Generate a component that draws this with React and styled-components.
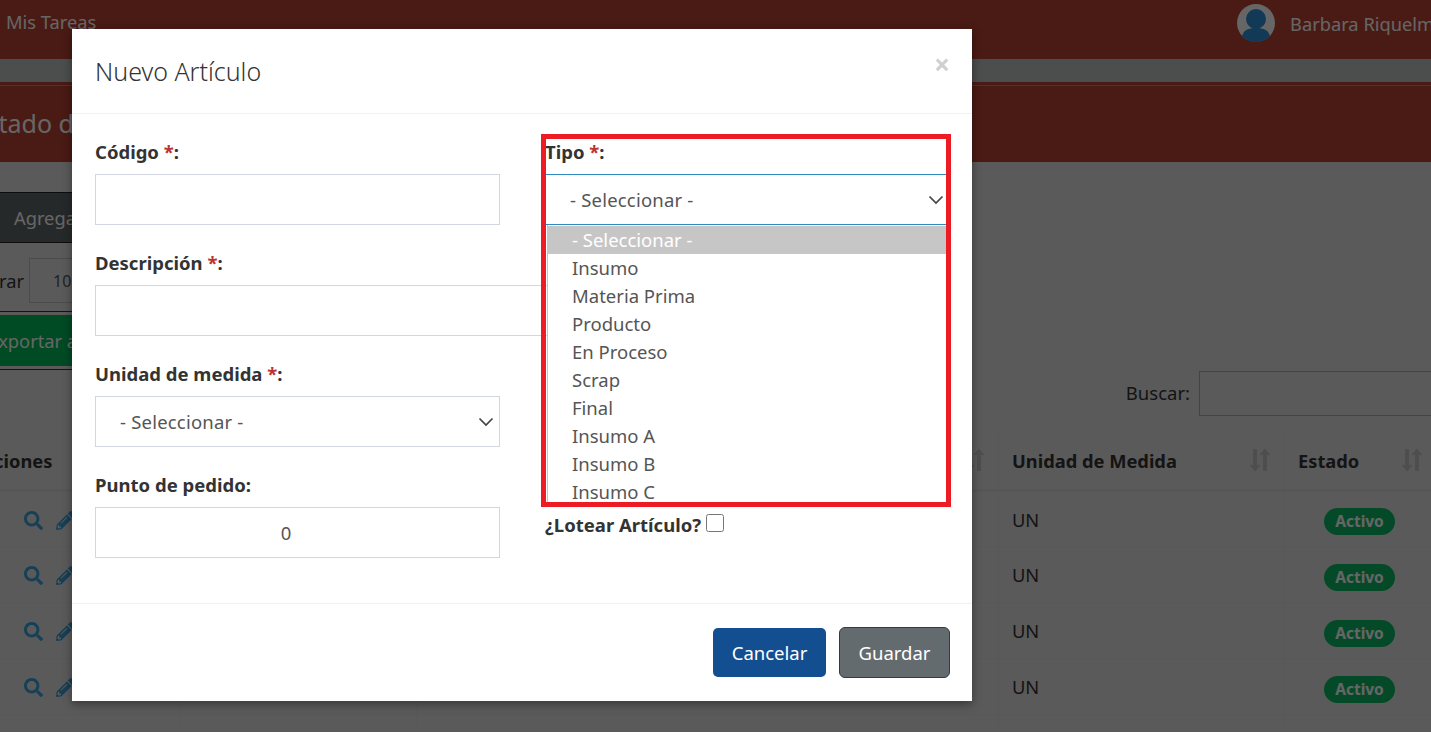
import React from "react";
import styled, { createGlobalStyle } from "styled-components";
import { FaSearch, FaPencilAlt } from "react-icons/fa";

const font = `"Noto Sans", "Open Sans", Arial, sans-serif`;

const GlobalStyle = createGlobalStyle`
  html, body { margin: 0; padding: 0; background: #fff; }
  * { box-sizing: border-box; }
  body { font-family: ${font}; font-size: 18px; color: #333; }
`;

const Page = styled.div`
  position: relative;
  width: 100%;
  height: 732px;
  overflow: hidden;
  background: #e2e2e2;
`;

const Sheet = styled.div`
  width: 1640px;
  margin-left: -60px;
`;

const Nav = styled.header`
  height: 59px;
  background: #b94132;
  color: #fff;
  display: flex;
  align-items: flex-start;
  justify-content: space-between;
  padding: 9px 0 0 66px;
  font-size: 18.3px;
`;

const User = styled.div`
  width: 343px;
  display: flex;
  align-items: center;
  gap: 15px;
  margin-top: -5px;
`;

const Strip = styled.div`
  height: 23px;
  background: #bec3c0;
`;

const Banner = styled.div`
  height: 80px;
  background: #b94132;
  border-top: 3px solid #b94132;
  box-shadow: inset 0 1px 0 #d9766a;
  color: #fff;
  font-size: 25px;
  padding: 21px 0 0 27px;
`;

const Content = styled.div`
  padding-top: 30px;
`;

const AddButton = styled.div`
  width: 210px;
  height: 51px;
  margin-left: 48px;
  background: #5f6669;
  border: 1px solid #222;
  color: #fff;
  display: flex;
  align-items: center;
  padding-left: 25px;
  font-size: 18.3px;
`;

const LengthRow = styled.div`
  display: flex;
  align-items: center;
  gap: 5px;
  margin: 15px 0 0 16px;
  font-size: 18.3px;
`;

const LengthBox = styled.div`
  width: 80px;
  height: 45px;
  border: 1px solid #bbb;
  display: flex;
  align-items: center;
  padding-left: 23px;
  font-size: 16px;
  color: #555;
`;

const ExportWrap = styled.div`
  width: 300px;
  margin-top: 8px;
  padding: 3px 0;
  border-top: 1px solid #333;
  border-bottom: 1px solid #333;
`;

const ExportButton = styled.div`
  height: 51px;
  background: #00b85a;
  color: #fff;
  display: flex;
  align-items: center;
  padding-left: 48px;
  font-size: 18.3px;
`;

const SearchRow = styled.div`
  display: flex;
  justify-content: flex-end;
  align-items: center;
  gap: 9px;
  margin-top: 1px;
  font-size: 18.5px;
`;

const SearchLabel = styled.span`
  margin-top: -3px;
`;

const SearchBox = styled.div`
  width: 381px;
  height: 45px;
  border: 1px solid #aaa;
`;

const Table = styled.table`
  width: 1540px;
  margin-top: 16px;
  border-collapse: collapse;
  table-layout: fixed;
`;

const Th = styled.th`
  height: 58px;
  padding: 0 13px 2px;
  text-align: left;
  font-size: 18.3px;
  font-weight: 700;
  color: #333;
  border: 1px solid #dcdcdc;
  border-bottom: 3px solid #d6d6d6;
  border-top-color: #e0e0e0;
`;

const ThFirst = styled(Th)`
  padding-left: 31px;
`;

const ThInner = styled.div`
  display: flex;
  align-items: center;
  justify-content: space-between;
  width: ${({ $width }) => ($width ? `${$width}px` : "auto")};
`;

const Td = styled.td`
  height: 56px;
  padding: 0 13px 0 ${({ $pad }) => $pad || 13}px;
  font-size: 18.3px;
  color: #333;
  border: 1px solid #dcdcdc;
`;

const Actions = styled.div`
  display: flex;
  gap: 13px;
  color: #3a9fd8;
  font-size: 19px;
  margin-top: 2px;
`;

const Badge = styled.span`
  display: inline-block;
  width: 71px;
  height: 27px;
  margin: 5px 0 0 26px;
  vertical-align: middle;
  line-height: 26px;
  border-radius: 14px;
  background: #0db864;
  color: #fff;
  font-size: 15.5px;
  font-weight: 700;
  text-align: center;
`;

const Backdrop = styled.div`
  position: absolute;
  inset: 0;
  background: rgba(0, 0, 0, 0.6);
`;

const Modal = styled.div`
  position: absolute;
  left: 72px;
  top: 29px;
  width: 900px;
  height: 672px;
  background: #fff;
  box-shadow: 0 3px 9px rgba(0, 0, 0, 0.4);
  display: flex;
  flex-direction: column;
`;

const ModalHeader = styled.div`
  height: 85px;
  padding: 0 23px;
  display: flex;
  align-items: center;
  justify-content: space-between;
  border-bottom: 1px solid #f1f1f1;
`;

const Title = styled.h4`
  margin: 0;
  font-size: 25px;
  font-weight: 300;
  color: #333;
`;

const Close = styled.span`
  font-size: 28px;
  font-weight: 700;
  color: #cfcfcf;
  margin: -15px -1px 0 0;
`;

const ModalBody = styled.div`
  position: relative;
  flex: 1;
  padding: 20px 22px 0 23px;
  display: grid;
  grid-template-columns: 405px 405px;
  grid-auto-rows: 111px;
  column-gap: 45px;
`;

const Field = styled.div`
  position: relative;
  grid-column: ${({ $wide }) => ($wide ? "1 / -1" : "auto")};
`;

const Label = styled.label`
  display: block;
  height: 40px;
  padding-top: 5px;
  font-size: 18.5px;
  font-weight: 700;
  line-height: 26px;
  color: #333;
  em {
    font-style: normal;
    color: #b33;
  }
`;

const TextInput = styled.input`
  display: block;
  width: 100%;
  height: 51px;
  padding: ${({ $center }) => ($center ? "0 33px 0 25px" : "0 25px")};
  border: 1px solid #d2d6e2;
  background: #fff;
  font: 18.5px ${font};
  color: #555;
  text-align: ${({ $center }) => ($center ? "center" : "left")};
  outline: none;
`;

const SelectWrap = styled.div`
  position: relative;
  height: 51px;
  > svg {
    position: absolute;
    right: 6px;
    top: 21px;
  }
`;

const Select = styled.select`
  display: block;
  width: 100%;
  height: 100%;
  padding: 0 24px;
  appearance: none;
  border: 1px solid ${({ $open }) => ($open ? "#2e8bc0" : "#d2d6e2")};
  background: #fff;
  font: 18.5px ${font};
  letter-spacing: 0.2px;
  color: #555;
  outline: none;
`;

const OptionList = styled.ul`
  position: absolute;
  left: 2px;
  top: 100%;
  width: 400px;
  height: 280px;
  margin: 0;
  padding: 1px 0 0;
  list-style: none;
  overflow: hidden;
  background: #fff;
  border-left: 1px solid #c4c4c4;
  z-index: 1;
`;

const Option = styled.li`
  height: 28px;
  padding-left: 24px;
  line-height: 28px;
  font-size: 18.5px;
  color: ${({ $selected }) => ($selected ? "#fff" : "#555")};
  background: ${({ $selected }) => ($selected ? "#c6c6c6" : "#fff")};
`;

const CheckRow = styled.div`
  display: flex;
  align-items: flex-start;
  gap: 5px;
  padding-top: 45px;
  font-size: 18.5px;
  font-weight: 700;
  line-height: 26px;
  color: #333;
`;

const CheckBox = styled.input`
  width: 18px;
  height: 18px;
  margin: 2px 0 0;
  accent-color: #555;
`;

const Highlight = styled.div`
  position: absolute;
  left: 469px;
  top: 20px;
  width: 410px;
  height: 373px;
  border: 5px solid #ed1c24;
  pointer-events: none;
  z-index: 2;
`;

const ModalFooter = styled.div`
  height: 98px;
  padding: 0 22px 0 0;
  border-top: 1px solid #f1f1f1;
  display: flex;
  justify-content: flex-end;
  align-items: center;
  gap: 13px;
`;

const CancelButton = styled.button`
  width: 113px;
  height: 49px;
  border: none;
  border-radius: 5px;
  background: #134e91;
  color: #fff;
  font: 18.5px ${font};
`;

const SaveButton = styled.button`
  width: 111px;
  height: 51px;
  border: 1px solid #343a40;
  border-radius: 6px;
  background: #636b6f;
  color: #fff;
  font: 18.5px ${font};
`;

const Chevron = () => (
  <svg width="16" height="10" viewBox="0 0 16 10" fill="none" stroke="#444" strokeWidth="1.7">
    <path d="M1.5 1.500 8 8l6.500-6.500" />
  </svg>
);

const SortIcon = () => (
  <svg width="22" height="24" viewBox="0 0 22 24" fill="#c2c2c2">
    <path d="M4 1h4v16h3.500L6 23.500.5 17H4z" />
    <path d="M14 23h4V7h3.500L16 .5 10.500 7H14z" />
  </svg>
);

const Avatar = () => (
  <svg width="38" height="38" viewBox="0 0 38 38">
    <circle cx="19" cy="19" r="19" fill="#fff" />
    <circle cx="19" cy="15" r="10" fill="#2f8fd8" />
    <path d="M5 32c2-6 6-8 14-8s12 2 14 8a19 19 0 0 1-28 0z" fill="#2f8fd8" />
  </svg>
);

const tipos = [
  "- Seleccionar -",
  "Insumo",
  "Materia Prima",
  "Producto",
  "En Proceso",
  "Scrap",
  "Final",
  "Insumo A",
  "Insumo B",
  "Insumo C",
];

const rows = [0, 1, 2, 3, 4];

const Background = () => (
  <Sheet>
    <Nav>
      <span>Mis Tareas</span>
      <User>
        <Avatar />
        <span>Barbara Riquelme</span>
      </User>
    </Nav>
    <Strip />
    <Banner>Listado de Artículos</Banner>
    <Content>
      <AddButton>Agregar Artículo</AddButton>
      <LengthRow>
        Mostrar
        <LengthBox>10</LengthBox>
      </LengthRow>
      <ExportWrap>
        <ExportButton>Exportar a Excel</ExportButton>
      </ExportWrap>
      <SearchRow>
        <SearchLabel>Buscar:</SearchLabel>
        <SearchBox />
      </SearchRow>
      <Table>
        <colgroup>
          <col style={{ width: 240 }} />
          <col style={{ width: 236 }} />
          <col style={{ width: 582 }} />
          <col style={{ width: 286 }} />
          <col style={{ width: 196 }} />
        </colgroup>
        <thead>
          <tr>
            <ThFirst>Acciones</ThFirst>
            <Th>Código</Th>
            <Th>
              <ThInner>
                Descripción
                <SortIcon />
              </ThInner>
            </Th>
            <Th>
              <ThInner>
                Unidad de Medida
                <SortIcon />
              </ThInner>
            </Th>
            <Th>
              <ThInner $width={125}>
                Estado
                <SortIcon />
              </ThInner>
            </Th>
          </tr>
        </thead>
        <tbody>
          {rows.map((r) => (
            <tr key={r}>
              <Td $pad={83}>
                <Actions>
                  <FaSearch />
                  <FaPencilAlt />
                </Actions>
              </Td>
              <Td />
              <Td />
              <Td>UN</Td>
              <Td>
                <Badge>Activo</Badge>
              </Td>
            </tr>
          ))}
        </tbody>
      </Table>
    </Content>
  </Sheet>
);

export default function App() {
  return (
    <>
      <GlobalStyle />
      <Page>
        <Background />
        <Backdrop />
        <Modal>
          <ModalHeader>
            <Title>Nuevo Artículo</Title>
            <Close>×</Close>
          </ModalHeader>
          <ModalBody>
            <Field>
              <Label>
                Código <em>*</em>:
              </Label>
              <TextInput />
            </Field>
            <Field>
              <Label>
                Tipo <em>*</em>:
              </Label>
              <SelectWrap>
                <Select $open defaultValue="">
                  <option value="">- Seleccionar -</option>
                </Select>
                <Chevron />
                <OptionList>
                  {tipos.map((t, i) => (
                    <Option key={t} $selected={i === 0}>
                      {t}
                    </Option>
                  ))}
                </OptionList>
              </SelectWrap>
            </Field>
            <Field $wide>
              <Label>
                Descripción <em>*</em>:
              </Label>
              <TextInput />
            </Field>
            <Field>
              <Label>
                Unidad de medida <em>*</em>:
              </Label>
              <SelectWrap>
                <Select defaultValue="">
                  <option value="">- Seleccionar -</option>
                </Select>
                <Chevron />
              </SelectWrap>
            </Field>
            <Field />
            <Field>
              <Label>Punto de pedido:</Label>
              <TextInput type="number" defaultValue="0" $center />
            </Field>
            <Field>
              <CheckRow>
                ¿Lotear Artículo?
                <CheckBox type="checkbox" />
              </CheckRow>
            </Field>
            <Highlight />
          </ModalBody>
          <ModalFooter>
            <CancelButton>Cancelar</CancelButton>
            <SaveButton>Guardar</SaveButton>
          </ModalFooter>
        </Modal>
      </Page>
    </>
  );
}
